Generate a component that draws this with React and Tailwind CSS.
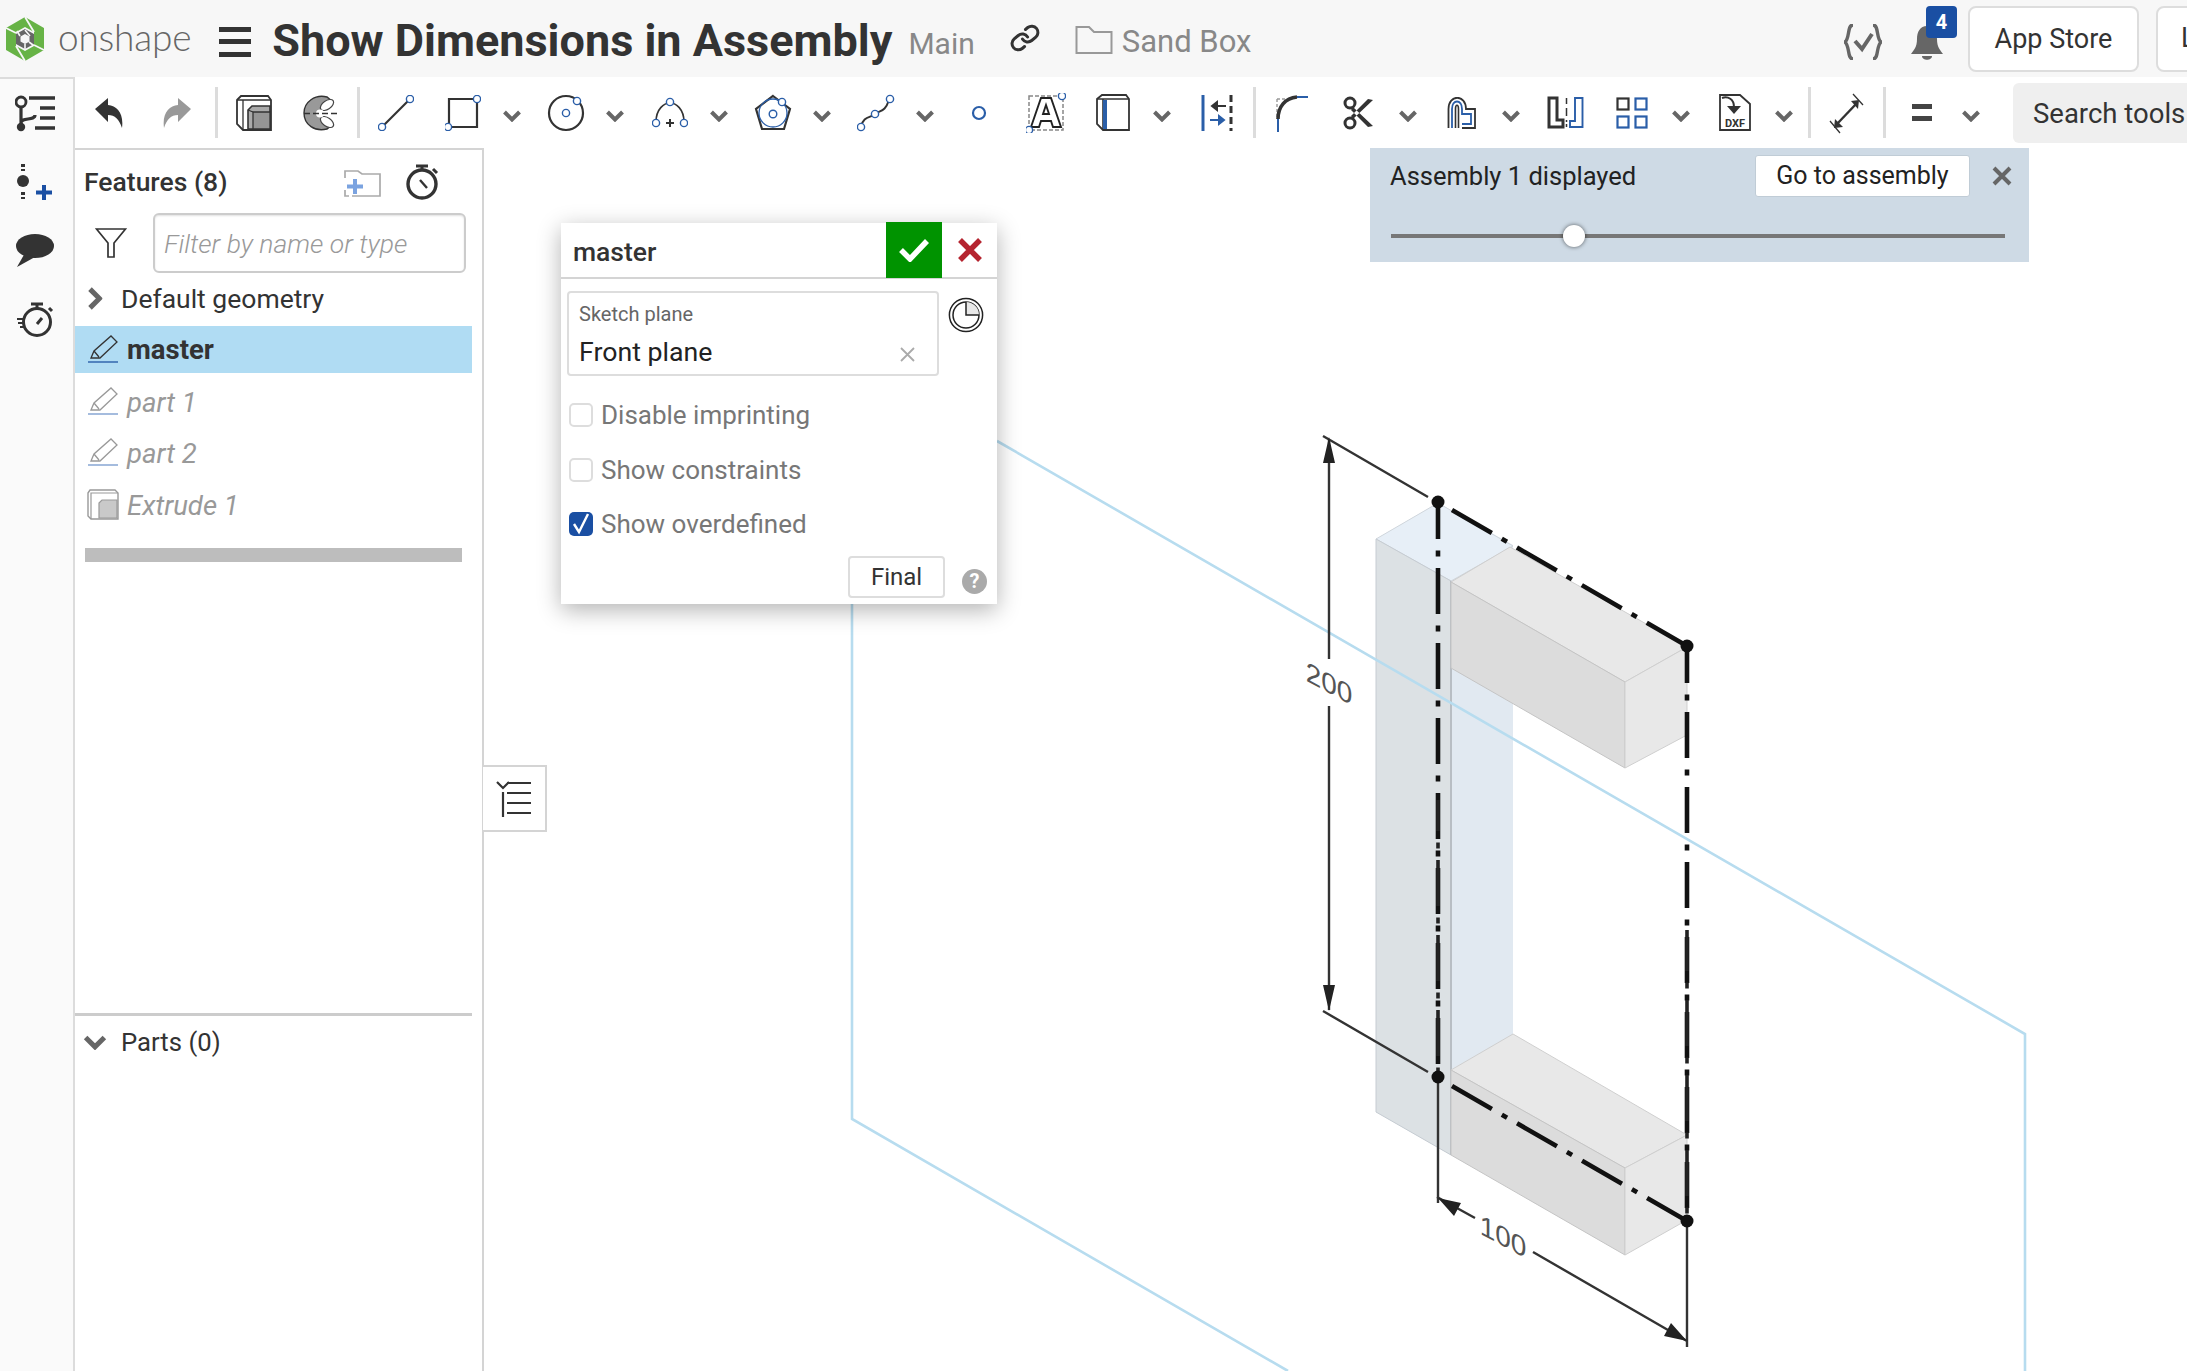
import React from "react";
import { Link } from "lucide-react";

const Chev = ({ right, big }) => (
  <svg width={big ? "24" : "20"} height={big ? "15" : "12"} viewBox="0 0 19 12" className={right ? "rotate-[-90deg]" : ""}>
    <path d="M2 2 L9.5 9.5 L17 2" fill="none" stroke="#666" strokeWidth="4" />
  </svg>
);
const ChevCell = () => <div className="w-[48px] h-[50px] flex items-center justify-center shrink-0 mt-[6px]"><Chev /></div>;
const Sep = ({ className }) => <div className={"w-[3px] h-[51px] bg-[#dcdcdc] shrink-0 " + className} />;
const Tool = ({ children, className = "" }) => <div className={"w-[50px] h-[50px] flex items-center justify-center shrink-0 " + className}>{children}</div>;
const H = ({ x, y, r = 3.6 }) => <circle cx={x} cy={y} r={r} fill="#fff" stroke="#2a5ea8" strokeWidth="1.4" />;

const Ic = {
  Logo: () => (
    <svg width="40" height="44" viewBox="0 0 40 44">
      <path d="M20 0 L39 11 V33 L20 44 L1 33 V11 Z M20 10 L11 15 V29 L20 34 L29 29 V15 Z" fill="#67b346" fillRule="evenodd" />
      <path d="M11 16 L1 11 M29 15 L20 0 M29 28 L39 33 M11 29 L20 44" stroke="#f7f7f7" strokeWidth="1.8" />
      <path d="M20 12 L29 17 V27 L20 32 L11 27 V17 Z M20 17 L15.5 19.5 V24.5 L20 27 L24.5 24.5 V19.5 Z" fill="#666" fillRule="evenodd" />
      <path d="M15 19 L12 14 M25 19 L20 13 M24 25 L28 28 M20 27 L20 33" stroke="#f7f7f7" strokeWidth="1.6" />
    </svg>
  ),
  Undo: ({ c = "#333", flip }) => (
    <svg width="28" height="30" viewBox="0 0 28 30" className={flip ? "-scale-x-100" : ""}>
      <path d="M0 11 L13 0 V7 C22 8 29 15 27 30 C24 21 20 17 13 17 V24 Z" fill={c} />
    </svg>
  ),
  Extrude: () => (
    <svg width="36" height="36" viewBox="0 0 36 36">
      <path d="M1 5 L5 1 H32 L35 5 V35 H7 L1 29 Z" fill="#fff" stroke="#333" strokeWidth="1.8" />
      <path d="M7 35 V5 H35 M7 5 L1 5" fill="none" stroke="#333" strokeWidth="1.3" />
      <path d="M12 15 L16 11 H34 V34 H12 Z" fill="#aaa" stroke="#333" strokeWidth="1.6" />
      <path d="M17 17 H34 V34 H17 Z" fill="#959595" stroke="#333" strokeWidth="1.3" />
      <path d="M12 15 L17 17" stroke="#333" strokeWidth="1.3" />
    </svg>
  ),
  Revolve: () => (
    <svg width="36" height="36" viewBox="0 0 36 36">
      <path d="M24 2 C12 -1 1 7 1 18 C1 30 12 37 24 34 L30 29 C26 25 20 24 18 21 V15 C20 12 26 11 30 7 Z" fill="#999" stroke="#333" strokeWidth="1.4" />
      <ellipse cx="24" cy="10" rx="7.5" ry="4.2" transform="rotate(-35 24 10)" fill="#fff" stroke="#444" strokeWidth="1.2" />
      <ellipse cx="24" cy="27" rx="7.5" ry="4.2" transform="rotate(35 24 27)" fill="#fff" stroke="#444" strokeWidth="1.2" />
      <circle cx="17" cy="18.5" r="4" fill="#fff" />
      <path d="M1 18.5 H35" stroke="#333" strokeWidth="1.4" strokeDasharray="6 3" />
    </svg>
  ),
  Line: () => (
    <svg width="36" height="36" viewBox="0 0 36 36">
      <path d="M4 32 L32 4" stroke="#333" strokeWidth="2.2" /><H x={4} y={32} /><H x={32} y={4} />
    </svg>
  ),
  Rect: () => (
    <svg width="36" height="36" viewBox="0 0 36 36">
      <path d="M4 4 H32 V32 H4 Z" fill="none" stroke="#333" strokeWidth="2.2" /><H x={32} y={4} /><H x={3} y={32} />
    </svg>
  ),
  Circle: () => (
    <svg width="38" height="38" viewBox="0 0 38 38">
      <circle cx="19" cy="19" r="17" fill="none" stroke="#333" strokeWidth="2.2" /><H x={19} y={19} /><H x={30} y={7} />
    </svg>
  ),
  Arc: () => (
    <svg width="36" height="36" viewBox="0 0 36 36">
      <path d="M4 27 C4 14 12 8 18 8 C24 8 32 14 32 27" fill="none" stroke="#333" strokeWidth="1.6" />
      <path d="M18 24 V32 M14 28 H22" stroke="#333" strokeWidth="2" /><H x={18} y={7} /><H x={4} y={28} /><H x={32} y={28} />
    </svg>
  ),
  Poly: () => (
    <svg width="38" height="38" viewBox="0 0 38 38">
      <path d="M19 2 L36 15 L30 35 H8 L2 15 Z" fill="none" stroke="#333" strokeWidth="2.2" />
      <circle cx="19" cy="19" r="14" fill="none" stroke="#2a5ea8" strokeWidth="1.3" /><H x={19} y={20} r={3.8} /><H x={28} y={8} />
    </svg>
  ),
  Spline: () => (
    <svg width="38" height="38" viewBox="0 0 38 38">
      <path d="M4 33 C6 22 14 24 18 20 C24 16 28 18 32 6" fill="none" stroke="#333" strokeWidth="2" /><H x={4} y={33} /><H x={18} y={20} /><H x={33} y={5} />
    </svg>
  ),
  Point: () => <svg width="16" height="16" viewBox="0 0 16 16"><circle cx="8" cy="8" r="6" fill="none" stroke="#2a5ea8" strokeWidth="2.2" /></svg>,
  TextT: () => (
    <svg width="40" height="40" viewBox="0 0 40 40">
      <rect x="3" y="3" width="34" height="34" fill="none" stroke="#888" strokeWidth="1.5" strokeDasharray="4 2" />
      <path d="M15 5 H25 L35 34 H27 L25 28 H15 L13 34 H5 Z M17 21 H23 L20 12 Z" fill="#fff" stroke="#222" strokeWidth="1.9" fillRule="evenodd" />
      <H x={36} y={3} /><H x={3} y={37} />
    </svg>
  ),
  Face: () => (
    <svg width="34" height="38" viewBox="0 0 34 38">
      <path d="M1 5 L6 1 H30 L33 5 V36 H7 L1 30 Z" fill="#fff" stroke="#333" strokeWidth="1.8" />
      <path d="M7 36 V5 H33 M7 5 L1 5" fill="none" stroke="#333" strokeWidth="1.6" />
      <path d="M9 6 V35" stroke="#2a5ea8" strokeWidth="4" />
    </svg>
  ),
  Mirror: () => (
    <svg width="34" height="38" viewBox="0 0 34 38">
      <path d="M2 1 V37" stroke="#2a5ea8" strokeWidth="3" />
      <path d="M30 1 V37" stroke="#333" strokeWidth="3" strokeDasharray="7 4" />
      <path d="M25 12 H11 M11 12 L16 8 V16 Z" stroke="#333" strokeWidth="2" fill="#333" />
      <path d="M9 26 H23 M23 26 L18 22 V30 Z" stroke="#2a5ea8" strokeWidth="2" fill="#2a5ea8" />
    </svg>
  ),
  Fillet: () => (
    <svg width="34" height="40" viewBox="0 0 34 40">
      <path d="M2 6 H12 M2 6 V26" stroke="#999" strokeWidth="1.4" strokeDasharray="3 2" fill="none" />
      <path d="M3 26 C3 14 10 5 22 4" fill="none" stroke="#333" strokeWidth="3.6" />
      <path d="M3 26 V39 M22 4 H33" stroke="#2a5ea8" strokeWidth="2" />
    </svg>
  ),
  Scissors: () => (
    <svg width="32" height="34" viewBox="0 0 32 34">
      <circle cx="7" cy="7" r="5" fill="none" stroke="#333" strokeWidth="3" /><circle cx="7" cy="27" r="5" fill="none" stroke="#333" strokeWidth="3" />
      <path d="M10 11 L30 30 L25 31 L8 14 Z M10 23 L30 4 L25 3 L8 20 Z" fill="#333" />
    </svg>
  ),
  Offset: () => (
    <svg width="30" height="32" viewBox="0 0 30 32" fill="none">
      <path d="M1.5 31 V12 C1.5 -3 19 -3 19 12 H28 V31 H15" stroke="#333" strokeWidth="1.8" />
      <path d="M8.5 31 V12 C8.5 7 11.5 7 11.5 12 V31" stroke="#333" strokeWidth="1.6" />
      <path d="M5 31 V12 C5 2 15 2 15 12 V17 H24 V27 H15" stroke="#2a5ea8" strokeWidth="1.8" />
    </svg>
  ),
  Use: () => (
    <svg width="37" height="33" viewBox="0 0 37 33" fill="none">
      <path d="M2 2 H10 V24 H16 V31 H2 Z" stroke="#333" strokeWidth="3" />
      <path d="M19.5 2 V8 M19.5 12 V20 M19.5 24 V26 M19.5 28 V31" stroke="#333" strokeWidth="1.5" />
      <path d="M28 2 H35.5 V31 H23 V25 H28 Z" stroke="#2a5ea8" strokeWidth="1.9" />
    </svg>
  ),
  Pattern: () => (
    <svg width="32" height="32" viewBox="0 0 32 32" fill="none" strokeWidth="2.2">
      <rect x="1.5" y="1.5" width="11" height="11" stroke="#333" /><rect x="19.5" y="1.5" width="11" height="11" stroke="#2a5ea8" />
      <rect x="1.5" y="19.5" width="11" height="11" stroke="#2a5ea8" /><rect x="19.5" y="19.5" width="11" height="11" stroke="#2a5ea8" />
    </svg>
  ),
  Dxf: () => (
    <svg width="34" height="38" viewBox="0 0 34 38">
      <path d="M2 1 H22 L32 10 V36 H2 Z" fill="#fff" stroke="#333" strokeWidth="1.8" />
      <path d="M4 4 C10 2 16 5 16 13" fill="none" stroke="#333" strokeWidth="2" />
      <path d="M9 12 H23 L16 20 Z" fill="#333" />
      <text x="17" y="33" textAnchor="middle" fontSize="11" fontWeight="700" fill="#333" fontFamily="Roboto">DXF</text>
    </svg>
  ),
  Dim: () => (
    <svg width="36" height="44" viewBox="0 0 36 44">
      <path d="M8 33 L28 12" stroke="#333" strokeWidth="2.4" />
      <path d="M22 10 L30 9 L29 18Z M6 28 L5 37 L14 36 Z" fill="#333" />
      <path d="M24 3 L34 14 M1 30 L11 42" stroke="#333" strokeWidth="1.3" />
    </svg>
  ),
  Eq: () => <div className="w-[20px] h-[17px] flex flex-col justify-between"><div className="h-[5px] bg-[#444]" /><div className="h-[5px] bg-[#444]" /></div>,
  Tree: () => (
    <svg width="40" height="37" viewBox="0 0 40 37">
      <circle cx="6" cy="7" r="5" fill="none" stroke="#333" strokeWidth="2.8" />
      <path d="M6 12 V31 M6 28 C6 22 20 26 20 20" fill="none" stroke="#333" strokeWidth="3.2" />
      <circle cx="6" cy="32" r="4.2" fill="#333" />
      <path d="M14 3 H40 M25 13 H40 M25 23 H40 M20 33 H40" stroke="#333" strokeWidth="3.6" />
    </svg>
  ),
  RailAdd: () => (
    <svg width="36" height="38" viewBox="0 0 36 38">
      <path d="M6 1 V8 M6 29 V36" stroke="#333" strokeWidth="4" strokeDasharray="3 2" />
      <circle cx="6" cy="18" r="6" fill="#333" />
      <path d="M27 22 V37 M19 29.5 H35" stroke="#1a4fa3" strokeWidth="4" />
    </svg>
  ),
  Comment: () => (
    <svg width="40" height="34" viewBox="0 0 40 34">
      <ellipse cx="20" cy="13" rx="19" ry="12" fill="#333" /><path d="M10 20 L2 34 L20 24 Z" fill="#333" />
    </svg>
  ),
  RailTimer: () => (
    <svg width="38" height="36" viewBox="0 0 38 36" fill="none" stroke="#333">
      <circle cx="21" cy="20" r="13.5" strokeWidth="3" />
      <path d="M15 2 H27 M21 2 V6 M33 6 L36 9" strokeWidth="3" />
      <path d="M21 22 L26 16" strokeWidth="3" />
      <path d="M1 17 H9 M2 21 H8 M4 25 H9" stroke="#333" strokeWidth="2" />
    </svg>
  ),
  FolderAdd: () => (
    <svg width="38" height="30" viewBox="0 0 38 30" fill="none">
      <path d="M1 10 V3 H14 L18 6 H36 V28 H8" stroke="#aaa" strokeWidth="1.7" />
      <path d="M1 22 V28 H5" stroke="#aaa" strokeWidth="1.7" />
      <path d="M11 11 V26 M3 18.5 H19" stroke="#7ba3e0" strokeWidth="4" />
    </svg>
  ),
  Stopwatch: () => (
    <svg width="34" height="36" viewBox="0 0 34 36" fill="none" stroke="#333">
      <circle cx="17" cy="20" r="14" strokeWidth="3.4" />
      <path d="M11 2 H23 M17 2 V6 M28 5 L32 9" strokeWidth="3" />
      <path d="M15 16 L22 24" strokeWidth="2.4" />
    </svg>
  ),
  Funnel: () => (
    <svg width="32" height="32" viewBox="0 0 32 32"><path d="M1.5 2 H30.5 L19 16 V30 H13 V16 Z" fill="none" stroke="#333" strokeWidth="1.7" /></svg>
  ),
  Pencil: ({ c = "#333", u = "#2a5ea8" }) => (
    <svg width="32" height="30" viewBox="0 0 32 30" fill="none">
      <path d="M4 23 L7 16 L24 1 L30 7 L13 23 Z M7 16 L12 22" stroke={c} strokeWidth="1.3" />
      <path d="M1 27 H31" stroke={u} strokeWidth="1.4" />
    </svg>
  ),
  ExtrudeSmall: () => (
    <svg width="32" height="32" viewBox="0 0 32 32">
      <path d="M1 4 L3 1 H28 L31 4 V30 H4 L1 27 Z" fill="#fff" stroke="#999" strokeWidth="1.4" />
      <path d="M4 30 V4 H31" fill="none" stroke="#999" strokeWidth="1.2" />
      <path d="M12 14 L15 11 H30 V29 H12 Z" fill="#c9c9c9" stroke="#999" strokeWidth="1.2" />
    </svg>
  ),
  Outline: () => (
    <svg width="36" height="38" viewBox="0 0 36 38" fill="none" stroke="#333">
      <path d="M1 2 L7 8 L13 2" strokeWidth="2.2" />
      <path d="M7 12 V37" strokeWidth="2.2" />
      <path d="M11 3 H35 M11 13 H35 M11 23 H35 M11 33 H35" strokeWidth="2" />
    </svg>
  ),
  Plane: () => (
    <svg width="36" height="36" viewBox="0 0 36 36" fill="none">
      <circle cx="18" cy="18" r="16.6" stroke="#222" strokeWidth="1.5" />
      <circle cx="18" cy="18" r="13" stroke="#222" strokeWidth="1.5" />
      <path d="M18 5 V18 H31 A13 13 0 0 0 18 5 Z" fill="#e8e8e8" />
      <path d="M18 5 V18 H31" stroke="#222" strokeWidth="1.5" />
    </svg>
  ),
  Braces: () => (
    <svg width="38" height="36" viewBox="0 0 38 36" fill="none" stroke="#666">
      <path d="M9 1 C3 1 6 14 1 18 C6 22 3 35 9 35 M29 1 C35 1 32 14 37 18 C32 22 35 35 29 35" strokeWidth="3.4" />
      <path d="M11 17 L18 25 L28 10" strokeWidth="4" />
    </svg>
  ),
  Bell: () => (
    <svg width="34" height="36" viewBox="0 0 34 36">
      <path d="M17 1 C24 1 27 7 27 14 C27 22 30 25 33 29 H1 C4 25 7 22 7 14 C7 7 10 1 17 1 Z" fill="#666" />
      <path d="M12 31 H22 C22 36 12 36 12 31 Z" fill="#666" />
    </svg>
  ),
};

const Row = ({ icon, children, className = "" }) => (
  <div className={"h-[51.5px] flex items-center pl-[12px] gap-[8px] " + className}>
    <div className="w-[32px] flex items-center justify-center shrink-0">{icon}</div>
    <span className="mt-[1px]">{children}</span>
  </div>
);

const Check = ({ on, children }) => (
  <div className="flex items-center h-[24px] gap-[8px] text-[26px] text-[#777]">
    {on ? (
      <div className="w-[24px] h-[24px] rounded-[5px] bg-[#1a4fa3] flex items-center justify-center">
        <svg width="20" height="22" viewBox="0 0 20 22"><path d="M3 11 L8 19 L17 1" fill="none" stroke="#fff" strokeWidth="2.4" /></svg>
      </div>
    ) : (
      <div className="w-[24px] h-[24px] rounded-[5px] border-2 border-[#ddd] bg-white" />
    )}
    <span>{children}</span>
  </div>
);

const Canvas = () => (
  <svg width="2112" height="1223" viewBox="75 148 2112 1223" className="absolute left-0 top-0">
    <path d="M1376 539 L1438 503 L1513 545 V1035 L1451 1070 V1155 L1376 1112 Z" fill="#e1e9f1" />
    <path d="M1376 539 L1438 503 L1513 546 L1451 581 Z" fill="#e7eff7" stroke="#d0d6dc" strokeWidth="1" />
    <path d="M1376 539 L1451 581 V1155 L1376 1112 Z" fill="#dce1e4" stroke="#c6ccd2" strokeWidth="1" />
    <path d="M1451 581 V1155" stroke="#b8bec4" strokeWidth="2" />
    <path d="M1451 582 L1510 547 L1687 647 L1625 682 Z" fill="#e8e8e8" stroke="#cfcfcf" strokeWidth="1" />
    <path d="M1451 582 L1625 682 V768 L1451 668 Z" fill="#dcdcdc" stroke="#c4c4c4" strokeWidth="1" />
    <path d="M1625 682 L1687 647 V735 L1625 768 Z" fill="#e8e8e8" stroke="#cfcfcf" strokeWidth="1" />
    <path d="M1451 1070 L1513 1034 L1687 1135 L1625 1168 Z" fill="#e8e8e8" stroke="#cfcfcf" strokeWidth="1" />
    <path d="M1451 1070 L1625 1168 V1255 L1451 1155 Z" fill="#dcdcdc" stroke="#c4c4c4" strokeWidth="1" />
    <path d="M1625 1168 L1687 1135 V1220 L1625 1255 Z" fill="#e8e8e8" stroke="#cfcfcf" strokeWidth="1" />

    <path d="M852 580 V1119 L1288 1371 M997 441 L2025 1034 V1371" fill="none" stroke="#b7dcef" strokeWidth="2.6" />

    <g fill="none" stroke="#333" strokeWidth="2.4">
      <path d="M1323 436 L1428 497 M1323 1011 L1428 1072" />
      <path d="M1329 440 V659 M1329 706 V1010" />
      <path d="M1438 1077 V1203 M1687 1221 V1347" />
      <path d="M1437 1197 L1475 1218 M1533 1252 L1687 1341" />
    </g>
    <path d="M1329 437 L1323 463 L1335 463 Z M1329 1011 L1323 985 L1335 985 Z M1438 1198 L1461 1203 L1454 1216 Z M1687 1341 L1664 1336 L1671 1323 Z" fill="#222" />
    <g fill="none" stroke="#111" strokeWidth="4.6" strokeDasharray="46 11.5 6 11.5">
      <path d="M1438 502 V1077" strokeDashoffset="9" />
      <path d="M1687 646 V1221" strokeDashoffset="9" />
      <path d="M1452 510 L1687 646" />
      <path d="M1452 1086 L1687 1221" />
    </g>
    <g fill="none" stroke="#222" strokeWidth="3.6" strokeDasharray="46 11.5 6 11.5">
      <path d="M1438 800 V1077" strokeDashoffset="15" />
      <path d="M1687 930 V1221" strokeDashoffset="5" />
    </g>
    <circle cx="1438" cy="502" r="6.5" fill="#111" />
    <circle cx="1687" cy="646" r="6.5" fill="#111" />
    <circle cx="1438" cy="1077" r="6.5" fill="#111" />
    <circle cx="1687" cy="1221" r="6.5" fill="#111" />
    <text textAnchor="middle" fontSize="28" fill="#555" fontFamily="'Liberation Sans', sans-serif" transform="translate(1329 693) skewY(28)">200</text>
    <text textAnchor="middle" fontSize="28" fill="#555" fontFamily="'Liberation Sans', sans-serif" transform="translate(1503 1246) skewY(28)">100</text>
  </svg>
);

export default function App() {
  return (
    <div className="w-[2187px] h-[1371px] overflow-hidden flex flex-col bg-white text-[#333] font-['Roboto',sans-serif]">
      {/* Header */}
      <header className="h-[77px] shrink-0 bg-[#f7f7f7] flex items-center overflow-hidden">
        <div className="ml-[5px] w-[41px] shrink-0 mt-[1px]"><Ic.Logo /></div>
        <span className="ml-[12px] font-['Lato',sans-serif] font-light text-[37px] text-[#666] leading-none mb-[4px] tracking-[-0.2px]">onshape</span>
        <div className="ml-[28px] w-[32px] h-[30px] flex flex-col justify-between shrink-0 mt-[6px]">
          <div className="h-[5px] bg-[#333]" /><div className="h-[5px] bg-[#333]" /><div className="h-[5px] bg-[#333]" />
        </div>
        <h1 className="ml-[21px] text-[45px] font-bold leading-none whitespace-nowrap mt-[3px]">Show Dimensions in Assembly</h1>
        <span className="ml-[16px] text-[30px] text-[#888] mt-[9px]">Main</span>
        <Link size={30} strokeWidth={2.4} className="ml-[35px] mb-[2px] text-[#333] rotate-[5deg]" />
        <svg width="38" height="30" viewBox="0 0 38 30" className="ml-[35px] shrink-0 mt-[3px]" fill="none">
          <path d="M1.5 28 V2 H14 L19 7 H36.5 V28 Z" stroke="#999" strokeWidth="2" />
        </svg>
        <span className="ml-[9px] text-[31px] text-[#888] mt-[8px]">Sand Box</span>
        <div className="ml-auto flex items-center shrink-0 -mr-[27px]">
          <div className="mt-[7px]"><Ic.Braces /></div>
          <div className="ml-[28px] relative w-[34px] h-[36px] mt-[9px]">
            <Ic.Bell />
            <div className="absolute left-[16px] top-[-19px] w-[31px] h-[32px] bg-[#1a4fa3] rounded-[4px] text-white font-bold text-[20px] flex items-center justify-center">4</div>
          </div>
          <button className="ml-[24px] w-[171px] h-[66px] bg-white border-2 border-[#ddd] rounded-[8px] text-[27px] text-[#333] pt-[1px]">App Store</button>
          <button className="ml-[17px] w-[58px] h-[66px] bg-white border-2 border-[#ddd] rounded-[8px] text-[27px] text-[#333] text-left pl-[23px]">L</button>
        </div>
      </header>

      <div className="flex-1 flex min-h-0">
        {/* Rail */}
        <aside className="w-[75px] shrink-0 bg-[#fafafa] border-r-2 border-t-2 border-[#dcdcdc] flex flex-col items-center">
          <div className="mt-[16px] mr-[4px]"><Ic.Tree /></div>
          <div className="mt-[31px] mr-[4px]"><Ic.RailAdd /></div>
          <div className="mt-[32px] mr-[4px]"><Ic.Comment /></div>
          <div className="mt-[35px] mr-[3px]"><Ic.RailTimer /></div>
        </aside>

        <div className="flex-1 flex flex-col min-w-0">
          {/* Toolbar */}
          <div className="h-[71px] shrink-0 flex items-center pl-[9px] overflow-hidden">
            <Tool><Ic.Undo /></Tool>
            <Tool className="ml-[18px]"><Ic.Undo c="#999" flip /></Tool>
            <Sep className="ml-[13px]" />
            <Tool className="ml-[11px]"><Ic.Extrude /></Tool>
            <Tool className="ml-[17px]"><Ic.Revolve /></Tool>
            <Sep className="ml-[11px]" />
            <Tool className="ml-[11px]"><Ic.Line /></Tool>
            <Tool className="ml-[17px]"><Ic.Rect /></Tool>
            <ChevCell />
            <Tool className="ml-[5px]"><Ic.Circle /></Tool>
            <ChevCell />
            <Tool className="ml-[6px]"><Ic.Arc /></Tool>
            <ChevCell />
            <Tool className="ml-[5px]"><Ic.Poly /></Tool>
            <ChevCell />
            <Tool className="ml-[5px]"><Ic.Spline /></Tool>
            <ChevCell />
            <Tool className="ml-[5px]"><Ic.Point /></Tool>
            <Tool className="ml-[17px]"><Ic.TextT /></Tool>
            <Tool className="ml-[17px]"><Ic.Face /></Tool>
            <ChevCell />
            <Tool className="ml-[7px]"><Ic.Mirror /></Tool>
            <Sep className="ml-[10px]" />
            <Tool className="ml-[11px]"><Ic.Fillet /></Tool>
            <Tool className="ml-[17px]"><Ic.Scissors /></Tool>
            <ChevCell />
            <Tool className="ml-[5px]"><Ic.Offset /></Tool>
            <ChevCell />
            <Tool className="ml-[5px]"><Ic.Use /></Tool>
            <Tool className="ml-[17px]"><Ic.Pattern /></Tool>
            <ChevCell />
            <Tool className="ml-[5px]"><Ic.Dxf /></Tool>
            <ChevCell />
            <Sep />
            <Tool className="ml-[11px]"><Ic.Dim /></Tool>
            <Sep className="ml-[11px]" />
            <Tool className="ml-[11px]"><Ic.Eq /></Tool>
            <ChevCell />
            <div className="ml-[18px] w-[200px] h-[60px] bg-[#efefef] rounded-[6px] text-[27.5px] flex items-center pl-[20px] pt-[2px] whitespace-nowrap shrink-0">Search tools</div>
          </div>

          {/* Body */}
          <div className="flex-1 relative min-h-0">
            <Canvas />

            {/* Feature panel */}
            <section className="relative w-[409px] h-full bg-white border-t-2 border-r-2 border-[#d4d4d4] flex flex-col">
              <div className="h-[62px] flex items-center pl-[9px] shrink-0 mt-[1px]">
                <span className="text-[26.5px] font-medium whitespace-nowrap">Features (8)</span>
                <div className="ml-[117px] mt-[2px]"><Ic.FolderAdd /></div>
                <div className="ml-[23px]"><Ic.Stopwatch /></div>
              </div>
              <div className="flex items-center shrink-0">
                <div className="ml-[20px] w-[32px] flex"><Ic.Funnel /></div>
                <div className="ml-[26px] w-[313px] h-[60px] border-2 border-[#ccc] rounded-[6px] text-[26.5px] italic text-[#999] font-light flex items-center pl-[9px] pt-[1px] shadow-[inset_0_1px_2px_rgba(0,0,0,0.12)] whitespace-nowrap">Filter by name or type</div>
              </div>
              <div className="h-[51px] flex items-center shrink-0 text-[26.5px] whitespace-nowrap">
                <div className="ml-[8px] w-[24px] flex justify-center"><Chev right big /></div>
                <span className="ml-[14px]">Default geometry</span>
              </div>
              <div className="w-[397px] shrink-0 text-[27.5px] mt-[2px]">
                <Row icon={<Ic.Pencil />} className="bg-[#b0dcf3] font-bold !h-[47px]">master</Row>
                <Row icon={<Ic.Pencil c="#999" u="#7f9fd0" />} className="italic text-[#999] mt-[3px]">part 1</Row>
                <Row icon={<Ic.Pencil c="#999" u="#7f9fd0" />} className="italic text-[#999]">part 2</Row>
                <Row icon={<Ic.ExtrudeSmall />} className="italic text-[#999]">Extrude 1</Row>
              </div>
              <div className="ml-[10px] w-[377px] h-[14px] bg-[#bdbdbd] shrink-0 mt-[17px]" />
              <div className="mt-[451px] w-[397px] h-[3px] bg-[#ccc] shrink-0" />
              <div className="h-[54px] flex items-center text-[25.7px] shrink-0">
                <div className="ml-[8px] w-[24px] flex"><Chev big /></div>
                <span className="ml-[14px]">Parts (0)</span>
              </div>
            </section>

            {/* Outline tab */}
            <div className="absolute left-[408px] top-[617px] w-[64px] h-[67px] bg-white border-2 border-l-0 border-[#d4d4d4] flex items-center justify-center z-10"><Ic.Outline /></div>

            {/* Sketch dialog */}
            <div className="absolute left-[486px] top-[75px] w-[436px] h-[381px] bg-white shadow-[0_6px_22px_rgba(0,0,0,0.3)] flex flex-col z-20">
              <div className="h-[56px] flex items-center border-b-2 border-[#d4d4d4] shrink-0">
                <span className="ml-[12px] text-[26.5px] font-medium mt-[4px]">master</span>
                <div className="ml-auto w-[56px] h-[56px] bg-[#009300] flex items-center justify-center">
                  <svg width="32" height="24" viewBox="0 0 32 24"><path d="M3 12 L12 21 L29 3" fill="none" stroke="#fff" strokeWidth="5.5" /></svg>
                </div>
                <div className="w-[55px] flex items-center justify-center">
                  <svg width="24" height="24" viewBox="0 0 24 24"><path d="M2 2 L22 22 M22 2 L2 22" stroke="#b5242f" strokeWidth="5.5" /></svg>
                </div>
              </div>
              <div className="flex mt-[12px] ml-[6px] shrink-0">
                <div className="w-[372px] h-[85px] border-2 border-[#ddd] rounded-[4px] flex flex-col pl-[10px] relative">
                  <span className="text-[20px] text-[#666] mt-[9px] leading-[24px]">Sketch plane</span>
                  <span className="text-[26.7px] mt-[11px] leading-[30px] text-[#222]">Front plane</span>
                  <svg width="15" height="15" viewBox="0 0 15 15" className="absolute right-[22px] top-[54px]"><path d="M1 1 L14 14 M14 1 L1 14" stroke="#aaa" strokeWidth="1.8" /></svg>
                </div>
                <div className="ml-[9px] mt-[6px]"><Ic.Plane /></div>
              </div>
              <div className="ml-[8px] mt-[27px] shrink-0"><Check>Disable imprinting</Check></div>
              <div className="ml-[8px] mt-[31px] shrink-0"><Check>Show constraints</Check></div>
              <div className="ml-[8px] mt-[30px] shrink-0"><Check on>Show overdefined</Check></div>
              <div className="flex items-center mt-[20px] shrink-0">
                <button className="ml-[287px] w-[97px] h-[42px] border-2 border-[#ddd] rounded-[4px] text-[24px] text-[#333]">Final</button>
                <div className="ml-[17px] mt-[8px] w-[25px] h-[25px] rounded-full bg-[#aaa] text-white text-[20px] font-bold flex items-center justify-center">?</div>
              </div>
            </div>

            {/* Assembly banner */}
            <div className="absolute left-[1295px] top-0 w-[659px] h-[114px] bg-[#cedae5] z-20 flex flex-col">
              <div className="h-[56px] flex items-center shrink-0">
                <span className="ml-[20px] text-[25.5px] whitespace-nowrap text-[#222] mt-[1px]">Assembly 1 displayed</span>
                <button className="ml-auto w-[215px] h-[42px] bg-white rounded-[3px] border border-[#c0ccd6] text-[25px] whitespace-nowrap text-[#222]">Go to assembly</button>
                <svg width="20" height="20" viewBox="0 0 20 20" className="ml-[22px] mr-[17px]"><path d="M2 2 L18 18 M18 2 L2 18" stroke="#666" strokeWidth="4" /></svg>
              </div>
              <div className="ml-[21px] w-[614px] h-[4px] bg-[#777] relative mt-[30px]">
                <div className="absolute left-[172px] top-[-9px] w-[22px] h-[22px] rounded-full bg-white shadow-[0_0_4px_rgba(0,0,0,0.6)]" />
              </div>
            </div>
          </div>
        </div>
      </div>
    </div>
  );
}
